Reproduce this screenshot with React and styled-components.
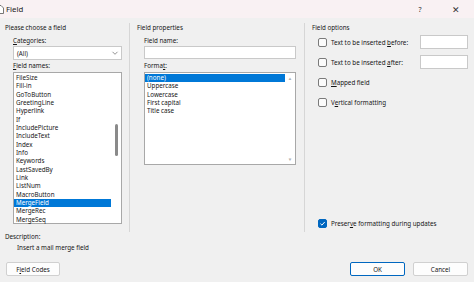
import React from 'react'
import styled, { createGlobalStyle } from 'styled-components'

const GlobalStyle = createGlobalStyle`
  html, body {
    margin: 0;
    padding: 0;
  }
  body {
    width: 474px;
    height: 282px;
    overflow: hidden;
    background: #f0f0f0;
    font-family: "Noto Sans", "Open Sans", sans-serif;
    font-size: 6.25px;
    color: #151515;
  }
`

// data
const fieldNames = [
  'FileSize', 'Fill-in', 'GoToButton', 'GreetingLine', 'Hyperlink', 'If',
  'IncludePicture', 'IncludeText', 'Index', 'Info', 'Keywords', 'LastSavedBy',
  'Link', 'ListNum', 'MacroButton', 'MergeField', 'MergeRec', 'MergeSeq',
]
const formats = ['(none)', 'Uppercase', 'Lowercase', 'First capital', 'Title case']

// styles
const Dialog = styled.div`
  width: 474px;
  height: 282px;
  display: flex;
  flex-direction: column;
  background: #f0f0f0;
`
const TitleBar = styled.div`
  height: 18px;
  background: #f9f1f3;
  display: flex;
  align-items: center;
  font-size: 7.8px;
  color: #1a1a1a;
`
const TitleIcon = styled.svg`
  width: 8px;
  height: 9px;
  margin-left: -4px;
  margin-right: 2px;
`
const Title = styled.span`
  flex: 1;
`
const TitleButton = styled.span`
  width: 36px;
  text-align: center;
  font-size: ${p => p.big ? '8.5px' : '7px'};
  color: #333;
`
const Body = styled.div`
  display: grid;
  grid-template-columns: 129px 1px 174px 1px 1fr;
  height: 209px;
  margin-top: 5px;
`
const Separator = styled.div`
  background: #d6d6d6;
`
const Panel = styled.div`
  display: flex;
  flex-direction: column;
  padding: 1px 0 0 ${p => p.pad}px;
`
const Heading = styled.div`
  line-height: 8px;
  height: 8px;
`
const Group = styled.div`
  display: flex;
  flex-direction: column;
  padding-left: ${p => p.indent}px;
  padding-top: 5px;
`
const Label = styled.div`
  line-height: 8px;
  height: 8px;
  margin-top: ${p => p.gap || 0}px;
`
const Select = styled.div`
  width: 109px;
  height: 14px;
  box-sizing: border-box;
  margin-top: 1px;
  border: 1px solid #c9c9c9;
  background: #fff;
  display: flex;
  align-items: center;
  padding-left: 3px;
  justify-content: space-between;
`
const TextBox = styled.div`
  width: ${p => p.w}px;
  height: ${p => p.h || 14}px;
  box-sizing: border-box;
  margin-top: ${p => p.mt || 0}px;
  border: 1px solid #c9c9c9;
  background: #fff;
`
const ListBox = styled.div`
  width: ${p => p.w}px;
  height: ${p => p.h}px;
  box-sizing: border-box;
  margin-top: 2px;
  border: 1px solid #a8a8a8;
  background: #fff;
  display: flex;
`
const Items = styled.div`
  flex: 1;
  padding-top: 1px;
`
const Item = styled.div`
  height: 8.33px;
  line-height: 8.33px;
  padding-left: 2px;
  background: ${p => p.selected ? '#0078d7' : 'transparent'};
  color: ${p => p.selected ? '#fff' : '#151515'};
  white-space: nowrap;
`
const ScrollTrack = styled.div`
  width: 10px;
  display: flex;
  flex-direction: column;
  align-items: center;
  padding-top: ${p => p.thumbTop || 0}px;
  justify-content: ${p => p.arrows ? 'space-between' : 'flex-start'};
  padding-bottom: ${p => p.arrows ? 2 : 0}px;
  color: #b0b0b0;
  font-size: 4.5px;
`
const Thumb = styled.div`
  width: 3px;
  height: 32px;
  border-radius: 2px;
  background: #8a8a8a;
`
const OptionRow = styled.div`
  display: flex;
  align-items: center;
  height: 14px;
  margin-top: ${p => p.gap}px;
`
const Check = styled.span`
  width: 9px;
  height: 9px;
  box-sizing: border-box;
  border: 1px solid ${p => p.checked ? '#0067c0' : '#7a7a7a'};
  border-radius: 2px;
  background: ${p => p.checked ? '#0067c0' : '#fbfbfb'};
  display: flex;
  align-items: center;
  justify-content: center;
  margin-right: 4px;
  flex: none;
`
const OptionText = styled.span`
  flex: 1;
  white-space: nowrap;
`
const Spacer = styled.div`
  flex: 1;
`
const Description = styled.div`
  padding-left: 5px;
  margin-top: 1px;
`
const DescText = styled.div`
  line-height: 8px;
  margin-top: 3px;
  padding-left: 12px;
`
const Footer = styled.div`
  display: flex;
  align-items: center;
  padding: 0 6px;
  margin-top: 10px;
`
const Button = styled.div`
  width: ${p => p.w}px;
  height: 14px;
  box-sizing: border-box;
  border: 1px solid ${p => p.primary ? '#0067c0' : '#d0d0d0'};
  border-radius: 2px;
  background: #fdfdfd;
  display: flex;
  align-items: center;
  justify-content: center;
  margin-left: ${p => p.ml || 0}px;
`

const CheckMark = () => (
  <svg width="7" height="7" viewBox="0 0 10 10">
    <path d="M2 5.2 L4.2 7.3 L8.2 2.8" fill="none" stroke="#fff" strokeWidth="1.4" />
  </svg>
)

const Chevron = () => (
  <svg width="8" height="6" viewBox="0 0 8 6" style={{ marginRight: 2 }}>
    <path d="M1.5 1.8 L4 4.3 L6.5 1.8" fill="none" stroke="#777" strokeWidth="0.8" />
  </svg>
)

const Option = ({ gap, checked, children, input }) => (
  <OptionRow gap={gap}>
    <Check checked={checked}>{checked && <CheckMark />}</Check>
    <OptionText>{children}</OptionText>
    {input && <TextBox w={48} style={{ marginRight: 6 }} />}
  </OptionRow>
)

const App = () => (
  <Dialog>
    <GlobalStyle />
    <TitleBar>
      <TitleIcon viewBox="0 0 8 9">
        <path d="M0.5 0.5 H5 L7.5 3 V8.5 H0.5 Z" fill="#fff" stroke="#555" strokeWidth="0.8" />
      </TitleIcon>
      <Title>Field</Title>
      <TitleButton>?</TitleButton>
      <TitleButton big>✕</TitleButton>
    </TitleBar>

    <Body>
      <Panel pad={5}>
        <Heading>Please choose a field</Heading>
        <Group indent={8}>
          <Label><u>C</u>ategories:</Label>
          <Select>
            <span>(All)</span>
            <Chevron />
          </Select>
          <Label gap={2}><u>F</u>ield names:</Label>
          <ListBox w={109} h={152}>
            <Items>
              {fieldNames.map(n => (
                <Item key={n} selected={n === 'MergeField'}>{n}</Item>
              ))}
            </Items>
            <ScrollTrack thumbTop={51}>
              <Thumb />
            </ScrollTrack>
          </ListBox>
        </Group>
      </Panel>
      <Separator />

      <Panel pad={7}>
        <Heading>Field properties</Heading>
        <Group indent={7}>
          <Label>Field name:</Label>
          <TextBox w={152} h={13} mt={1} />
          <Label gap={3}>Forma<u>t</u>:</Label>
          <ListBox w={152} h={93}>
            <Items>
              {formats.map(f => (
                <Item key={f} selected={f === '(none)'}>{f}</Item>
              ))}
            </Items>
            <ScrollTrack arrows thumbTop={2}>
              <span>▲</span>
              <span>▼</span>
            </ScrollTrack>
          </ListBox>
        </Group>
      </Panel>
      <Separator />

      <Panel pad={7}>
        <Heading>Field options</Heading>
        <Group indent={6} style={{ paddingTop: 3, flex: 1, paddingBottom: 2 }}>
          <Option gap={0} input>Text to be inserted <u>b</u>efore:</Option>
          <Option gap={6} input>Text to be inserted <u>a</u>fter:</Option>
          <Option gap={6}><u>M</u>apped field</Option>
          <Option gap={6}>V<u>e</u>rtical formatting</Option>
          <Spacer />
          <Option gap={0} checked>Preser<u>v</u>e formatting during updates</Option>
        </Group>
      </Panel>
    </Body>

    <Description>
      <Label>Description:</Label>
      <DescText>Insert a mail merge field</DescText>
    </Description>

    <Footer>
      <Button w={54}>F<u>i</u>eld Codes</Button>
      <Spacer />
      <Button w={55} primary>OK</Button>
      <Button w={55} ml={8}>Cancel</Button>
    </Footer>
  </Dialog>
)

export default App
